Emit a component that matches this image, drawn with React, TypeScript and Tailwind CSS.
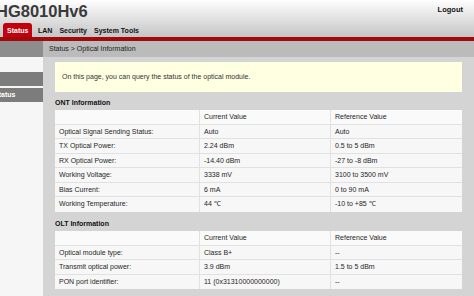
import React from "react";

const ont: [string, string, string][] = [
  ["Optical Signal Sending Status:", "Auto", "Auto"],
  ["TX Optical Power:", "2.24 dBm", "0.5 to 5 dBm"],
  ["RX Optical Power:", "-14.40 dBm", "-27 to -8 dBm"],
  ["Working Voltage:", "3338 mV", "3100 to 3500 mV"],
  ["Bias Current:", "6 mA", "0 to 90 mA"],
  ["Working Temperature:", "44 \u2103", "-10 to +85 \u2103"],
];

const olt: [string, string, string][] = [
  ["Optical module type:", "Class B+", "--"],
  ["Transmit optical power:", "3.9 dBm", "1.5 to 5 dBm"],
  ["PON port identifier:", "11 (0x31310000000000)", "--"],
];

function Table({ rows }: { rows: [string, string, string][] }) {
  const all: [string, string, string][] = [["", "Current Value", "Reference Value"], ...rows];
  return (
    <div className="w-[407px] bg-[#f7f7f7]">
      {all.map((r, i) => (
        <div
          key={i}
          className={
            "grid grid-cols-[145px_131px_131px] h-[14.57px] leading-[14px] " +
            (i < all.length - 1 ? "border-b border-[#e1e1e1]" : "") +
            (i === 0 ? " bg-[#fafafa]" : "")
          }
        >
          <div className="pl-[4px] border-r border-[#e1e1e1] whitespace-nowrap">{r[0]}</div>
          <div className="pl-[4px] border-r border-[#e1e1e1] whitespace-nowrap">{r[1]}</div>
          <div className="pl-[4px] whitespace-nowrap">{r[2]}</div>
        </div>
      ))}
    </div>
  );
}

export default function App() {
  return (
    <div
      className="w-[474px] h-[296px] overflow-hidden flex flex-col text-[#262626] text-[7px]"
      style={{ fontFamily: '"Liberation Sans", Arial, sans-serif' }}
    >
      {/* header */}
      <div className="h-[37px] flex flex-col bg-gradient-to-b from-[#fefefe] to-[#c5c5c5]">
        <div className="h-[23px] flex justify-between items-start">
          <div className="text-[16.5px] leading-[16.5px] font-bold text-[#3a3a3a] pt-[2.5px] ml-[-4px] whitespace-nowrap">
            HG8010Hv6
          </div>
          <div className="text-[7.5px] leading-[8px] font-bold text-[#111] pt-[6.4px] mr-[11px]">Logout</div>
        </div>
        <div className="h-[14px] flex items-end font-bold text-[7px] text-[#111]">
          <div className="ml-[3px] w-[29px] h-[14px] pl-[4px] pt-[1px] leading-[14px] bg-[#c2000e] text-white rounded-t-[3px]">
            Status
          </div>
          <div className="ml-[6px] h-[14px] pt-[1px] leading-[14px]">LAN</div>
          <div className="ml-[7px] h-[14px] pt-[1px] leading-[14px]">Security</div>
          <div className="ml-[7px] h-[14px] pt-[1px] leading-[14px]">System Tools</div>
        </div>
      </div>
      <div className="h-[4px] bg-[#a00a0c]" />
      {/* breadcrumb */}
      <div className="h-[16px] flex">
        <div className="w-[43px] bg-[#8d8d8d]" />
        <div className="flex-1 bg-[#bbbbbb] pl-[6px] leading-[15px] text-[#222]">Status &gt; Optical Information</div>
      </div>
      {/* body */}
      <div className="flex-1 flex">
        <div className="w-[43px] bg-[#f6f6f6] pt-[15px] flex flex-col gap-[1.5px]">
          <div className="h-[14px] bg-[#7c7c7c]" />
          <div className="h-[14px] bg-[#7c7c7c] text-white font-bold leading-[14px] pl-[0px] overflow-hidden whitespace-nowrap">
            <span className="ml-[-6px]">Status</span>
          </div>
        </div>
        <div className="flex-1 bg-[#d4d4d4] pl-[12px] pt-[5px]">
          <div className="w-[407px] h-[29.5px] bg-[#ffffe2] pl-[7px] leading-[29px] text-[#333]">
            On this page, you can query the status of the optical module.
          </div>
          <div className="h-[18.6px] font-bold leading-[18px] pt-[2px] text-[#111]">ONT Information</div>
          <Table rows={ont} />
          <div className="h-[19px] font-bold leading-[18px] pt-[3px] text-[#111]">OLT Information</div>
          <Table rows={olt} />
        </div>
      </div>
    </div>
  );
}
